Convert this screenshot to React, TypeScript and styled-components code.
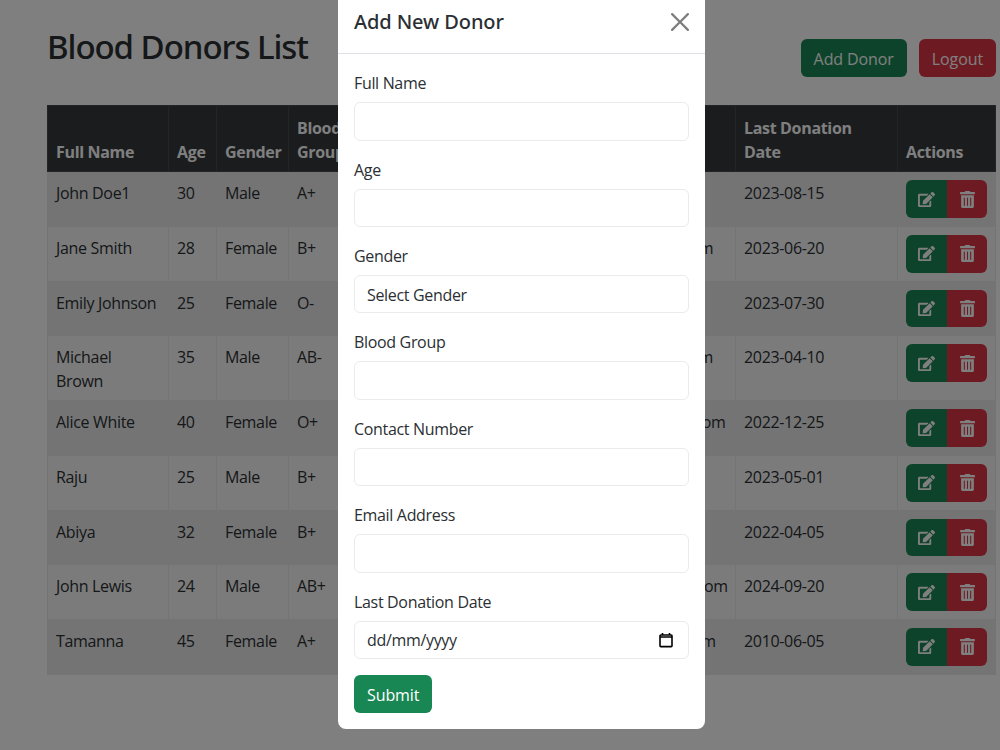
import React from "react";
import styled, { createGlobalStyle } from "styled-components";
import { FaEdit, FaTrashAlt } from "react-icons/fa";

const Global = createGlobalStyle`
  html, body { margin: 0; padding: 0; height: 100%; overflow: hidden; background: #fff; }
  body { font-family: "Open Sans", "Noto Sans", sans-serif; font-size: 16px; line-height: 24px; color: #2b2f33; letter-spacing: -0.33px; }
  * { box-sizing: border-box; }
`;

const Page = styled.div`
  padding: 23px 4px 0 47px;
`;
const TopBar = styled.header`
  display: flex;
  align-items: flex-start;
  justify-content: space-between;
  margin-bottom: 28px;
`;
const Heading = styled.h1`
  margin: 0;
  font-family: "Noto Sans", sans-serif;
  font-size: 33px;
  line-height: 48px;
  font-weight: 500;
  letter-spacing: -1.05px;
`;
const Actions = styled.div`
  display: flex;
  gap: 12px;
  margin-top: 16px;
`;
const Button = styled.button<{ $tone: "green" | "red" }>`
  height: 38px;
  padding: 1px 12px 0;
  border: 1px solid transparent;
  border-radius: 6px;
  font: inherit;
  letter-spacing: -0.1px;
  color: #fff;
  background: ${(p) => (p.$tone === "green" ? "#198754" : "#dc3545")};
`;
const Table = styled.table`
  width: 948px;
  table-layout: fixed;
  border-collapse: collapse;
`;
const Col = styled.col<{ $w: number }>`
  width: ${(p) => p.$w}px;
`;
const Th = styled.th`
  padding: 10.3px 8px 7px;
  background: #34383d;
  color: #fff;
  text-align: left;
  vertical-align: bottom;
  font-weight: 700;
  border: 1px solid #454a4e;
`;
const Row = styled.tr<{ $odd: boolean }>`
  background: ${(p) => (p.$odd ? "#e9e9e9" : "#f7f7f7")};
`;
const Td = styled.td`
  padding: 9px 8px 7px;
  vertical-align: top;
  border: 1px solid #e6e8ea;
  overflow: hidden;
  white-space: normal;
`;
const ActionTd = styled(Td)`
  padding: 8px;
`;
const Group = styled.div`
  display: flex;
  width: 81px;
  height: 37.7px;
  border-radius: 6px;
  overflow: hidden;
`;
const IconBtn = styled.button<{ $tone: "green" | "red"; $w: number }>`
  width: ${(p) => p.$w}px;
  padding: 0;
  border: 0;
  display: flex;
  align-items: center;
  justify-content: center;
  color: #fff;
  font-size: 17px;
  background: ${(p) => (p.$tone === "green" ? "#198754" : "#dc3545")};
`;
const Backdrop = styled.div`
  position: fixed;
  inset: 0;
  background: rgba(0, 0, 0, 0.5);
`;
const Modal = styled.div`
  position: absolute;
  left: 338px;
  top: -10px;
  width: 367px;
  background: #fff;
  border-radius: 8px;
`;
const ModalHead = styled.div`
  display: flex;
  align-items: center;
  justify-content: space-between;
  height: 64px;
  padding: 0 16px;
  border-bottom: 1px solid #dee2e6;
`;
const ModalTitle = styled.h5`
  margin: 0;
  font-family: "Noto Sans", sans-serif;
  font-size: 20px;
  line-height: 30px;
  font-weight: 500;
  letter-spacing: -0.1px;
`;
const Close = styled.button`
  width: 18px;
  height: 18px;
  padding: 0;
  border: 0;
  background: none;
  display: flex;
  color: #000;
  opacity: 0.5;
`;
const ModalBody = styled.form`
  padding: 16.3px 16px 16px;
`;
const Field = styled.div`
  margin-bottom: 16px;
`;
const Label = styled.label`
  display: block;
  padding-top: 1px;
  margin-bottom: 7px;
`;
const Input = styled.input`
  display: block;
  width: 100%;
  height: 38.4px;
  padding: 6px 12px;
  border: 1px solid #e9ebed;
  border-radius: 6px;
  background: #fff;
  font: inherit;
  color: #2b2f33;
  letter-spacing: inherit;
`;
const Select = styled.select`
  display: block;
  width: 100%;
  height: 38.4px;
  padding: 7px 12px 5px;
  border: 1px solid #e9ebed;
  border-radius: 6px;
  background: #fff;
  font: inherit;
  color: #2b2f33;
  letter-spacing: inherit;
  appearance: none;
`;
const DateBox = styled.div`
  display: flex;
  align-items: center;
  justify-content: space-between;
  height: 38.4px;
  padding: 6px 15px 6px 12px;
  border: 1px solid #e9ebed;
  border-radius: 6px;
  background: #fff;
`;
const Submit = styled(Button)`
  display: block;
`;

const donors = [
  ["John Doe1", 30, "Male", "A+", "9876543210", "john@example.com", "2023-08-15"],
  ["Jane Smith", 28, "Female", "B+", "9876543211", "jsmith.28@example.com", "2023-06-20"],
  ["Emily Johnson", 25, "Female", "O-", "9876543212", "emily.j@example.com", "2023-07-30"],
  ["Michael Brown", 35, "Male", "AB-", "9876543213", "michaelb@example.com", "2023-04-10"],
  ["Alice White", 40, "Female", "O+", "9876543214", "alice_white@example.com", "2022-12-25"],
  ["Raju", 25, "Male", "B+", "9876543215", "raju@example.com", "2023-05-01"],
  ["Abiya", 32, "Female", "B+", "9876543216", "abiya@example.com", "2022-04-05"],
  ["John Lewis", 24, "Male", "AB+", "9876543217", "john.lewis1@example.com", "2024-09-20"],
  ["Tamanna", 45, "Female", "A+", "9876543218", "tamannaj@example.com", "2010-06-05"],
];

const widths = [121, 48, 72, 60, 180, 207, 162, 98];
const heads = ["Full Name", "Age", "Gender", "Blood Group", "Contact Number", "Email", "Last Donation Date", "Actions"];
const fields = ["Full Name", "Age", "Gender", "Blood Group", "Contact Number", "Email Address"];

export default function App() {
  return (
    <>
      <Global />
      <Page>
        <TopBar>
          <Heading>Blood Donors List</Heading>
          <Actions>
            <Button $tone="green">Add Donor</Button>
            <Button $tone="red">Logout</Button>
          </Actions>
        </TopBar>
        <Table>
          <colgroup>
            {widths.map((w, i) => (
              <Col key={i} $w={w} />
            ))}
          </colgroup>
          <thead>
            <tr>
              {heads.map((h) => (
                <Th key={h}>{h}</Th>
              ))}
            </tr>
          </thead>
          <tbody>
            {donors.map((d, i) => (
              <Row key={i} $odd={i % 2 === 0}>
                {d.map((v, j) => (
                  <Td key={j}>{v}</Td>
                ))}
                <ActionTd>
                  <Group>
                    <IconBtn $tone="green" $w={41}>
                      <FaEdit />
                    </IconBtn>
                    <IconBtn $tone="red" $w={40}>
                      <FaTrashAlt />
                    </IconBtn>
                  </Group>
                </ActionTd>
              </Row>
            ))}
          </tbody>
        </Table>
      </Page>
      <Backdrop>
        <Modal>
          <ModalHead>
            <ModalTitle>Add New Donor</ModalTitle>
            <Close type="button" aria-label="Close">
              <svg width="18" height="18" viewBox="0 0 16 16" fill="currentColor">
                <path d="M.293.293a1 1 0 0 1 1.414 0L8 6.586 14.293.293a1 1 0 1 1 1.414 1.414L9.414 8l6.293 6.293a1 1 0 0 1-1.414 1.414L8 9.414l-6.293 6.293a1 1 0 0 1-1.414-1.414L6.586 8 .293 1.707a1 1 0 0 1 0-1.414z" />
              </svg>
            </Close>
          </ModalHead>
          <ModalBody>
            {fields.map((f) => (
              <Field key={f}>
                <Label>{f}</Label>
                {f === "Gender" ? (
                  <Select>
                    <option>Select Gender</option>
                  </Select>
                ) : (
                  <Input />
                )}
              </Field>
            ))}
            <Field>
              <Label>Last Donation Date</Label>
              <DateBox>
                <span>dd/mm/yyyy</span>
                <svg width="14" height="16" viewBox="0 0 14 16" fill="none" stroke="#000" strokeWidth="1.6">
                  <path d="M1 5h12M1.8 3h10.4a.8.8 0 0 1 .8.8v10a.8.8 0 0 1-.8.8H1.8a.8.8 0 0 1-.8-.8v-10a.8.8 0 0 1 .8-.8zM3.5 1v2.5M10.5 1v2.5" />
                </svg>
              </DateBox>
            </Field>
            <Submit $tone="green" type="button">
              Submit
            </Submit>
          </ModalBody>
        </Modal>
      </Backdrop>
    </>
  );
}
